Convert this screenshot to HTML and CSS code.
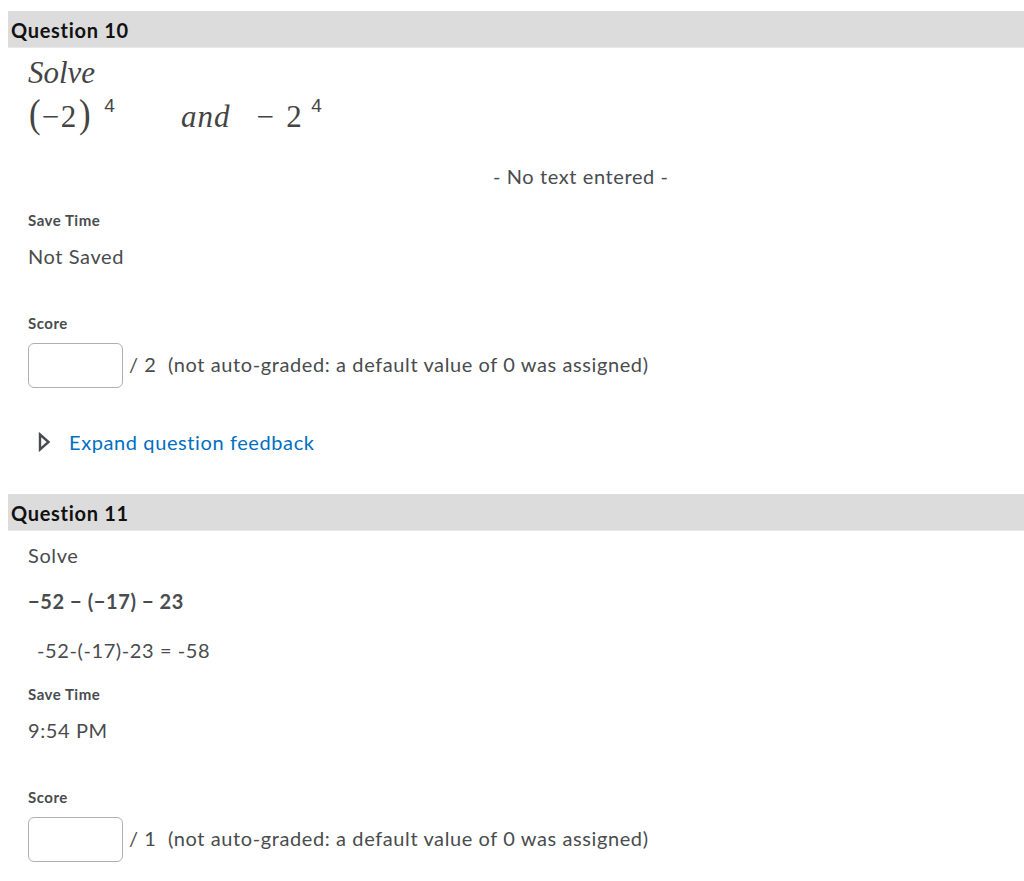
FILE: index.html
```html
<!DOCTYPE html>
<html>
<head>
<meta charset="utf-8">
<link rel="stylesheet" href="styles.css">
</head>
<body>
<section class="q">
  <h2 class="qhead">Question 10</h2>
  <div class="qbody">
    <div class="math solve">Solve</div>
    <div class="math expr">
      <span class="paren">(</span><span class="num">−2</span><span class="paren">)</span><sup class="sup1">4</sup>
      <span class="and">and</span>
      <span class="num minus">−</span><span class="num">2</span><sup class="sup2">4</sup>
    </div>
    <div class="notext">- No text entered -</div>
    <div class="label lbl-save">Save Time</div>
    <div class="value">Not Saved</div>
    <div class="label lbl-score">Score</div>
    <div class="scorerow">
      <span class="inbox"></span>
      <span class="scoretext">/ 2&nbsp;&nbsp;(not auto-graded: a default value of 0 was assigned)</span>
    </div>
    <div class="feedback">
      <svg class="tri" width="14" height="20" viewBox="0 0 14 20"><path d="M3 2.5 L11.5 10 L3 17.5 Z" fill="none" stroke="#494c4e" stroke-width="2.4" stroke-linejoin="miter"/></svg>
      <span class="link">Expand question feedback</span>
    </div>
  </div>
</section>
<section class="q q2">
  <h2 class="qhead">Question 11</h2>
  <div class="qbody">
    <div class="value solve2">Solve</div>
    <div class="bold">−52 − (−17) − 23</div>
    <div class="answer">-52-(-17)-23 = -58</div>
    <div class="label lbl-save2">Save Time</div>
    <div class="value">9:54 PM</div>
    <div class="label lbl-score">Score</div>
    <div class="scorerow">
      <span class="inbox"></span>
      <span class="scoretext">/ 1&nbsp;&nbsp;(not auto-graded: a default value of 0 was assigned)</span>
    </div>
  </div>
</section>
</body>
</html>
```
FILE: styles.css
```css
html, body {
  margin: 0;
  padding: 0;
  background: #fff;
}
body {
  padding: 11px 0 0 8px;
  font-family: Lato, "Liberation Sans", sans-serif;
  color: #494c4e;
  overflow: hidden;
}
.q2 {
  margin-top: 40px;
}
.qhead {
  margin: 0;
  height: 37px;
  line-height: 38px;
  background: #dcdcdc;
  border-bottom: 1px solid #e8e8e8;
  box-sizing: border-box;
  padding-left: 3px;
  font-size: 20px;
  letter-spacing: 0.7px;
  font-weight: 700;
  color: #111;
}
.qbody {
  padding-left: 20px;
}
.math {
  font-family: "Liberation Serif", "DejaVu Serif", serif;
  color: #444;
}
.solve {
  font-style: italic;
  font-size: 31px;
  line-height: 36px;
  margin-top: 7px;
}
.expr {
  display: flex;
  align-items: baseline;
  font-size: 31px;
  line-height: 44px;
  height: 44px;
}
.paren {
  font-size: 41px;
  transform: scaleX(0.85);
  display: inline-block;
}
.num {
  font-size: 31px;
  letter-spacing: 1.5px;
}
.sup1, .sup2 {
  font-size: 19px;
  font-family: "Liberation Sans", sans-serif;
  position: relative;
  top: -15px;
  vertical-align: baseline;
}
.sup1 { margin-left: 13px; }
.sup2 { margin-left: 8px; }
.and {
  font-style: italic;
  margin-left: 66px;
  letter-spacing: 1px;
}
.minus {
  margin-left: 26px;
  margin-right: 11px;
}
.notext {
  font-size: 20px;
  letter-spacing: 0.6px;
  line-height: 24px;
  margin-top: 29px;
  padding-left: 465px;
}
.label {
  font-size: 15px;
  letter-spacing: 0.5px;
  font-weight: 700;
  line-height: 18px;
  color: #494c4e;
}
.lbl-save { margin-top: 23px; }
.value {
  font-size: 20px;
  letter-spacing: 0.6px;
  line-height: 24px;
  margin-top: 15px;
}
.lbl-score { margin-top: 46px; }
.scorerow {
  display: flex;
  align-items: flex-start;
  margin-top: 11px;
}
.inbox {
  display: block;
  width: 95px;
  height: 45px;
  box-sizing: border-box;
  border: 1px solid #aeb1b3;
  border-radius: 6px;
  background: #fff;
}
.scoretext {
  font-size: 20px;
  letter-spacing: 0.6px;
  line-height: 24px;
  margin-top: 9px;
  margin-left: 6px;
}
.feedback {
  display: flex;
  align-items: center;
  margin-top: 42px;
  padding-left: 9px;
}
.tri { display: block; }
.link {
  font-size: 20px;
  letter-spacing: 0.6px;
  color: #006fbf;
  margin-left: 18px;
}
.solve2 { margin-top: 12px; }
.bold {
  font-size: 20px;
  letter-spacing: 0.6px;
  font-weight: 700;
  line-height: 24px;
  margin-top: 22px;
}
.answer {
  font-size: 20px;
  letter-spacing: 0.6px;
  line-height: 24px;
  margin-top: 25px;
  padding-left: 9px;
}
.lbl-save2 { margin-top: 23px; }
```
